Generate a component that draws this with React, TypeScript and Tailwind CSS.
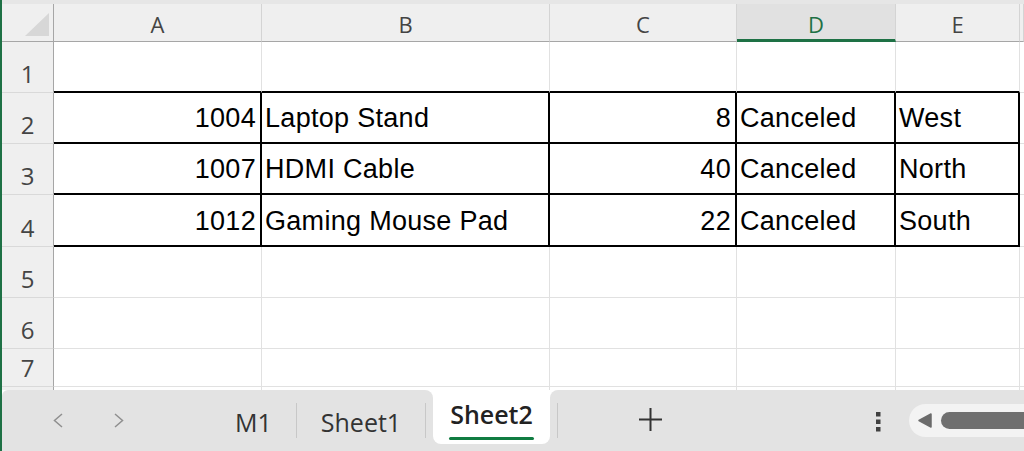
import React from "react";

const cols = "grid grid-cols-[52px_208px_288px_187px_159px_124px_1fr]";
const sans = "font-['Open_Sans',sans-serif]";
const arial = "font-['Liberation_Sans',Arial,sans-serif]";

interface RowDef {
  n: string;
  h: string;
  data?: string[];
  topEdge?: boolean;
}

const rows: RowDef[] = [
  { n: "1", h: "h-[51px]", topEdge: true },
  { n: "2", h: "h-[51px]", data: ["1004", "Laptop Stand", "8", "Canceled", "West"] },
  { n: "3", h: "h-[51px]", data: ["1007", "HDMI Cable", "40", "Canceled", "North"] },
  { n: "4", h: "h-[52px]", data: ["1012", "Gaming Mouse Pad", "22", "Canceled", "South"] },
  { n: "5", h: "h-[51px]" },
  { n: "6", h: "h-[51px]" },
  { n: "7", h: "h-[38px]" },
  { n: "", h: "h-[3px]" },
];

const letters = ["A", "B", "C", "D", "E", ""];
// numbers sit at the right of the cell, text at the left
const numeric = [true, false, true, false, false];

const HeaderRow = () => (
  <div className={`${cols} h-[38px] ${sans}`}>
    <div className="flex items-end justify-end border-r border-b border-[#a6a6a6] bg-[#efefef] pr-[4px] pb-[5px]">
      <svg width="24" height="23" viewBox="0 0 24 23">
        <polygon points="24,0 24,23 0,23" fill="#d7d7d7" />
      </svg>
    </div>
    {letters.map((l, i) =>
      l === "D" ? (
        <div
          key={i}
          className="flex items-end justify-center border-r border-b-[3px] border-r-[#d4d4d4] border-b-[#1e7145] bg-[#e1e1e1] pb-[4px] text-[22px] leading-none text-[#1e7145]"
        >
          {l}
        </div>
      ) : (
        <div
          key={i}
          className="flex items-end justify-center border-r border-b border-r-[#d4d4d4] border-b-[#a6a6a6] bg-[#efefef] pb-[6px] text-[22px] leading-none text-[#444]"
        >
          {l}
        </div>
      )
    )}
  </div>
);

const SheetRow = ({ row }: { row: RowDef }) => (
  <div className={`${cols} ${row.h}`}>
    <div
      className={`flex items-end justify-center overflow-hidden border-r border-b border-r-[#a6a6a6] border-b-[#d9d9d9] bg-[#efefef] pb-[6px] text-[24px] leading-none text-[#444] ${sans}`}
    >
      {row.n}
    </div>
    {[0, 1, 2, 3, 4].map((c) => {
      if (row.data) {
        return (
          <div
            key={c}
            className={`flex items-end border-r-2 border-b-2 border-black pb-[10px] text-[27px] leading-none tracking-[0.3px] text-black ${arial} ${
              numeric[c] ? "justify-end pr-[4px]" : "justify-start pl-[3px]"
            }`}
          >
            {row.data[c]}
          </div>
        );
      }
      if (row.topEdge) {
        return <div key={c} className="border-r border-b-2 border-r-[#e1e1e1] border-b-black" />;
      }
      return <div key={c} className="border-r border-b border-[#e1e1e1]" />;
    })}
    <div className="border-b border-[#e1e1e1]" />
  </div>
);

const Chevron = ({ dir, className }: { dir: "left" | "right"; className: string }) => (
  <svg className={className} width="12" height="15" viewBox="0 0 12 15">
    <polyline
      points={dir === "left" ? "10,1 2.5,7.5 10,14" : "2,1 9.5,7.5 2,14"}
      fill="none"
      stroke="#8f8f8f"
      strokeWidth="1.5"
    />
  </svg>
);

const TabBar = () => (
  <div className={`flex h-[61px] bg-white ${sans}`}>
    {/* nav arrows and inactive tabs */}
    <div className="flex w-[431px] shrink-0 items-start rounded-tl-[6px] rounded-tr-[8px] bg-[#e3e3e3]">
      <Chevron dir="left" className="ml-[50px] mt-[23px] shrink-0" />
      <Chevron dir="right" className="ml-[49px] mt-[23px] shrink-0" />
      <div className="ml-[86px] mt-[20px] w-[85px] shrink-0 text-center text-[25px] leading-none text-[#333]">
        M1
      </div>
      <div className="mt-[13px] h-[35px] w-px shrink-0 bg-[#c8c8c8]" />
      <div className="mt-[20px] w-[128px] shrink-0 text-center text-[25px] leading-none text-[#333]">
        Sheet1
      </div>
      <div className="mt-[13px] h-[35px] w-px shrink-0 bg-[#c8c8c8]" />
    </div>

    {/* active tab */}
    <div className="w-[117px] shrink-0 bg-[#e3e3e3]">
      <div className="flex h-[54px] flex-col items-center rounded-b-[8px] bg-white">
        <div className="mt-[12px] text-[25px] font-semibold leading-none text-[#222]">Sheet2</div>
        <div className="mt-[10px] h-[3px] w-[85px] rounded-full bg-[#107c41]" />
      </div>
    </div>

    {/* add sheet, options, scrollbar */}
    <div className="flex min-w-0 flex-1 items-start rounded-tl-[8px] bg-[#e3e3e3]">
      <div className="ml-[7px] mt-[13px] h-[35px] w-px shrink-0 bg-[#c8c8c8]" />
      <svg className="ml-[81px] mt-[18px] shrink-0" width="23" height="23" viewBox="0 0 23 23">
        <path d="M11.5 0v23M0 11.5h23" stroke="#333" strokeWidth="2" />
      </svg>
      <svg className="ml-[213px] mt-[22px] shrink-0" width="6" height="20" viewBox="0 0 6 20">
        <rect x="1" y="0" width="4.5" height="4.5" fill="#404040" />
        <rect x="1" y="7.5" width="4.5" height="4.5" fill="#404040" />
        <rect x="1" y="15" width="4.5" height="4.5" fill="#404040" />
      </svg>
      <div className="ml-[28px] mt-[14px] flex h-[33px] min-w-0 flex-1 items-center rounded-l-full bg-[#f3f3f3]">
        <svg className="ml-[9px] shrink-0" width="14" height="15" viewBox="0 0 14 15">
          <polygon points="13,1 13,14 1,7.5" fill="#6b6b6b" stroke="#6b6b6b" strokeWidth="1.5" strokeLinejoin="round" />
        </svg>
        <div className="ml-[9px] h-[17px] flex-1 rounded-l-full bg-[#6f6f6f]" />
      </div>
    </div>
  </div>
);

const App = () => {
  return (
    <div className="flex h-[451px] w-[1024px] flex-col overflow-hidden border-l-2 border-[#1e7145] bg-white">
      <div className="h-[4px] bg-[#e6e6e6]" />
      <HeaderRow />
      {rows.map((r, i) => (
        <SheetRow key={i} row={r} />
      ))}
      <TabBar />
    </div>
  );
};

export default App;
